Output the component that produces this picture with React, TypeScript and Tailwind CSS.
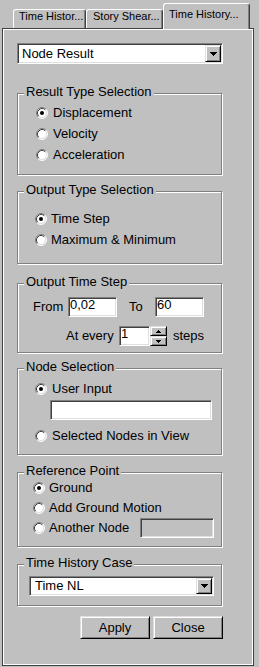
import React from "react";

const sunken =
  "border border-t-[#808080] border-l-[#808080] border-b-white border-r-white shadow-[inset_1px_1px_0_#404040,inset_-1px_-1px_0_#dfdfdf]";
const raised =
  "bg-[#c0c0c0] border border-t-[#dfdfdf] border-l-[#dfdfdf] border-b-black border-r-black shadow-[inset_1px_1px_0_#fff,inset_-1px_-1px_0_#808080]";
const group =
  "w-[205px] border border-[#808080] shadow-[inset_1px_1px_0_#fff,1px_1px_0_#fff]";
const legend = "-mt-[9px] ml-[6px] px-[2px] w-fit leading-[14px] bg-[#c0c0c0] whitespace-nowrap";

function Radio({ checked }: { checked?: boolean }) {
  return (
    <svg width="12" height="12" viewBox="0 0 12 12" className="shrink-0">
      <circle cx="6" cy="6" r="5" fill="#fff" />
      <path d="M2.11 9.89A5.5 5.5 0 0 1 9.89 2.11" stroke="#808080" fill="none" />
      <path d="M9.89 2.11A5.5 5.5 0 0 1 2.11 9.89" stroke="#fff" fill="none" />
      <path d="M2.82 9.18A4.5 4.5 0 0 1 9.18 2.82" stroke="#404040" fill="none" />
      <path d="M9.18 2.82A4.5 4.5 0 0 1 2.82 9.18" stroke="#dfdfdf" fill="none" />
      {checked && <circle cx="6" cy="6" r="2" fill="#000" />}
    </svg>
  );
}

function DownArrow() {
  return (
    <svg width="7" height="4" viewBox="0 0 7 4">
      <path d="M0 0h7v1H0zM1 1h5v1H1zM2 2h3v1H2zM3 3h1v1H3z" fill="#000" />
    </svg>
  );
}

function Combo({ text, className, textPad }: { text: string; className: string; textPad: string }) {
  return (
    <div className={`flex bg-white p-[1px] ${sunken} ${className}`}>
      <div className={`flex-1 flex items-center leading-[14px] whitespace-nowrap ${textPad}`}>{text}</div>
      <div className={`w-[16px] h-full flex items-center justify-center ${raised}`}>
        <DownArrow />
      </div>
    </div>
  );
}

export default function App() {
  return (
    <div className="w-[259px] h-[667px] bg-[#c0c0c0] text-black text-[13px] font-['Liberation_Sans',Arial,sans-serif] overflow-hidden">
      {/* Tabs */}
      <div className="flex items-end h-[28px] pl-[13px]">
        <div className="w-[73px] h-[19px] border-t border-l border-white border-r border-r-[#404040] rounded-tl-[3px] rounded-tr-[3px] shadow-[inset_-1px_0_0_#808080] text-[11px] leading-[12px] pl-[5px] whitespace-nowrap overflow-hidden">
          Time Histor...
        </div>
        <div className="w-[77px] h-[19px] border-t border-l border-white border-r border-r-[#404040] rounded-tl-[3px] rounded-tr-[3px] shadow-[inset_-1px_0_0_#808080] text-[11px] leading-[12px] pl-[6px] whitespace-nowrap overflow-hidden">
          Story Shear...
        </div>
        <div className="relative z-10 -mb-[1px] w-[87px] h-[26px] bg-[#c0c0c0] border-t border-l border-white border-r border-r-[#404040] rounded-tl-[3px] rounded-tr-[3px] shadow-[inset_-1px_0_0_#808080] text-[11px] leading-[12px] pl-[5px] pt-[4px] whitespace-nowrap overflow-hidden">
          Time History...
        </div>
      </div>

      {/* Panel */}
      <div className="ml-[2px] w-[252px] h-[638px] border border-[#404040] shadow-[inset_1px_1px_0_#fff,inset_-1px_-1px_0_#fff] pt-[14px] pl-[14px]">
        <Combo text="Node Result" className="w-[206px] h-[21px]" textPad="pl-[3px]" />

        {/* Result Type Selection */}
        <div className={`mt-[29px] h-[82px] ${group}`}>
          <div className={legend}>Result Type Selection</div>
          <div className="pt-[3px] pl-[18px]">
            <div className="flex items-center h-[21px] gap-[5px] whitespace-nowrap">
              <Radio checked />
              <span>Displacement</span>
            </div>
            <div className="flex items-center h-[21px] gap-[5px] whitespace-nowrap">
              <Radio />
              <span>Velocity</span>
            </div>
            <div className="flex items-center h-[21px] gap-[5px] whitespace-nowrap">
              <Radio />
              <span>Acceleration</span>
            </div>
          </div>
        </div>

        {/* Output Type Selection */}
        <div className={`mt-[16px] h-[73px] ${group}`}>
          <div className={legend}>Output Type Selection</div>
          <div className="pt-[11px] pl-[17px]">
            <div className="flex items-center h-[21px] gap-[4px] whitespace-nowrap">
              <Radio checked />
              <span>Time Step</span>
            </div>
            <div className="flex items-center h-[21px] gap-[4px] whitespace-nowrap">
              <Radio />
              <span>Maximum &amp; Minimum</span>
            </div>
          </div>
        </div>

        {/* Output Time Step */}
        <div className={`mt-[19px] h-[70px] ${group}`}>
          <div className={legend}>Output Time Step</div>
          <div className="mt-[8px] flex items-center h-[20px] pl-[15px] whitespace-nowrap">
            <span className="w-[35px]">From</span>
            <div className={`w-[49px] h-[20px] bg-white pl-[1px] leading-[14px] ${sunken}`}>0,02</div>
            <span className="ml-[12px] w-[26px]">To</span>
            <div className={`w-[49px] h-[20px] bg-white pl-[1px] leading-[14px] ${sunken}`}>60</div>
          </div>
          <div className="mt-[9px] flex items-center h-[20px] pl-[48px] whitespace-nowrap">
            <span className="w-[53px]">At every</span>
            <div className={`w-[31px] h-[20px] bg-white pl-[1px] leading-[14px] ${sunken}`}>1</div>
            <div className="w-[17px] h-[20px] flex flex-col">
              <div className={`h-[10px] flex items-center justify-center ${raised}`}>
                <svg width="5" height="3" viewBox="0 0 5 3">
                  <path d="M0 2h5v1H0zM1 1h3v1H1zM2 0h1v1H2z" fill="#000" />
                </svg>
              </div>
              <div className={`h-[10px] flex items-center justify-center ${raised}`}>
                <svg width="5" height="3" viewBox="0 0 5 3">
                  <path d="M0 0h5v1H0zM1 1h3v1H1zM2 2h1v1H2z" fill="#000" />
                </svg>
              </div>
            </div>
            <span className="ml-[6px]">steps</span>
          </div>
        </div>

        {/* Node Selection */}
        <div className={`mt-[15px] h-[87px] ${group}`}>
          <div className={legend}>Node Selection</div>
          <div className="mt-[5px] pl-[17px] flex items-center h-[20px] gap-[5px] whitespace-nowrap">
            <Radio checked />
            <span>User Input</span>
          </div>
          <div className={`mt-[1px] ml-[32px] w-[162px] h-[20px] bg-white ${sunken}`} />
          <div className="mt-[6px] pl-[17px] flex items-center h-[20px] gap-[5px] whitespace-nowrap">
            <Radio />
            <span>Selected Nodes in View</span>
          </div>
        </div>

        {/* Reference Point */}
        <div className={`mt-[17px] h-[75px] ${group}`}>
          <div className={legend}>Reference Point</div>
          <div className="pl-[15px]">
            <div className="flex items-center h-[20px] gap-[4px] whitespace-nowrap">
              <Radio checked />
              <span>Ground</span>
            </div>
            <div className="flex items-center h-[20px] gap-[4px] whitespace-nowrap">
              <Radio />
              <span>Add Ground Motion</span>
            </div>
            <div className="flex items-center h-[20px] gap-[4px] whitespace-nowrap">
              <Radio />
              <span className="w-[87px]">Another Node</span>
              <div className={`w-[74px] h-[20px] bg-[#c0c0c0] ${sunken}`} />
            </div>
          </div>
        </div>

        {/* Time History Case */}
        <div className={`mt-[17px] h-[42px] ${group}`}>
          <div className={legend}>Time History Case</div>
          <div className="mt-[6px] ml-[11px]">
            <Combo text="Time NL" className="w-[185px] h-[20px]" textPad="pl-[4px]" />
          </div>
        </div>

        {/* Buttons */}
        <div className="mt-[10px] w-[206px] flex justify-end gap-[3px]">
          <div className={`w-[70px] h-[23px] flex items-center justify-center ${raised}`}>Apply</div>
          <div className={`w-[70px] h-[23px] flex items-center justify-center ${raised}`}>Close</div>
        </div>
      </div>
    </div>
  );
}
